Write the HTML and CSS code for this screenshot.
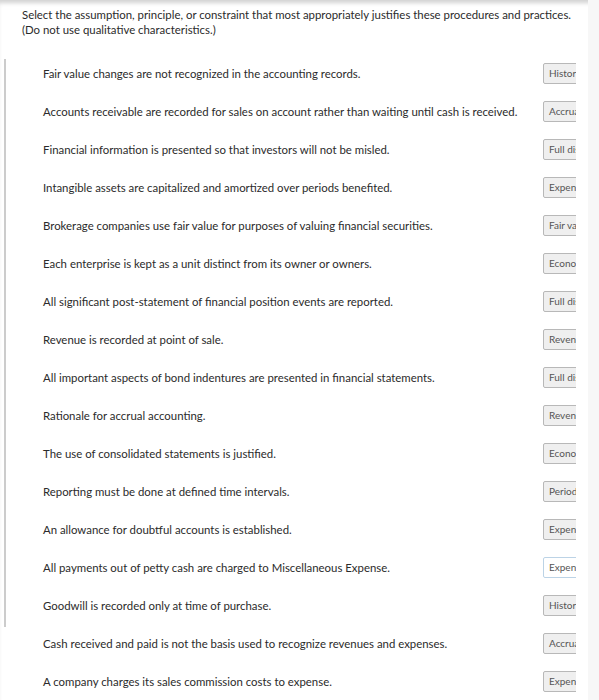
FILE: index.html
```html
<!DOCTYPE html>
<html lang="en">
<head>
    <meta charset="UTF-8">
    <meta name="viewport" content="width=device-width, initial-scale=1.0">
    <title>Assumptions, principles and constraints</title>
    <link rel="stylesheet" href="styles.css">
</head>
<body>
    <div class="page">
        <div class="main">
            <!-- Question prompt -->
            <div class="prompt">
                Select the assumption, principle, or constraint that most appropriately justifies these procedures and practices.<br>
                (Do not use qualitative characteristics.)
            </div>

            <!-- Matching list -->
            <div class="list">
                <div class="rail"></div>
                <div class="rows">
                    <div class="row"><span class="label">Fair value changes are not recognized in the accounting records.</span><div class="pick"><div class="box">Historical cost principle</div></div></div>
                    <div class="row"><span class="label">Accounts receivable are recorded for sales on account rather than waiting until cash is received.</span><div class="pick"><div class="box">Accrual-basis assumption</div></div></div>
                    <div class="row"><span class="label">Financial information is presented so that investors will not be misled.</span><div class="pick"><div class="box">Full disclosure principle</div></div></div>
                    <div class="row"><span class="label">Intangible assets are capitalized and amortized over periods benefited.</span><div class="pick"><div class="box">Expense recognition principle</div></div></div>
                    <div class="row"><span class="label">Brokerage companies use fair value for purposes of valuing financial securities.</span><div class="pick"><div class="box">Fair value principle</div></div></div>
                    <div class="row"><span class="label">Each enterprise is kept as a unit distinct from its owner or owners.</span><div class="pick"><div class="box">Economic entity assumption</div></div></div>
                    <div class="row"><span class="label">All significant post-statement of financial position events are reported.</span><div class="pick"><div class="box">Full disclosure principle</div></div></div>
                    <div class="row"><span class="label">Revenue is recorded at point of sale.</span><div class="pick"><div class="box">Revenue recognition principle</div></div></div>
                    <div class="row"><span class="label">All important aspects of bond indentures are presented in financial statements.</span><div class="pick"><div class="box">Full disclosure principle</div></div></div>
                    <div class="row"><span class="label">Rationale for accrual accounting.</span><div class="pick"><div class="box">Revenue recognition principle</div></div></div>
                    <div class="row"><span class="label">The use of consolidated statements is justified.</span><div class="pick"><div class="box">Economic entity assumption</div></div></div>
                    <div class="row"><span class="label">Reporting must be done at defined time intervals.</span><div class="pick"><div class="box">Periodicity assumption</div></div></div>
                    <div class="row"><span class="label">An allowance for doubtful accounts is established.</span><div class="pick"><div class="box">Expense recognition principle</div></div></div>
                    <div class="row"><span class="label">All payments out of petty cash are charged to Miscellaneous Expense.</span><div class="pick"><div class="box focused">Expense recognition principle</div></div></div>
                    <div class="row"><span class="label">Goodwill is recorded only at time of purchase.</span><div class="pick"><div class="box">Historical cost principle</div></div></div>
                    <div class="row"><span class="label">Cash received and paid is not the basis used to recognize revenues and expenses.</span><div class="pick"><div class="box">Accrual-basis assumption</div></div></div>
                    <div class="row"><span class="label">A company charges its sales commission costs to expense.</span><div class="pick"><div class="box">Expense recognition principle</div></div></div>
                </div>
            </div>
        </div>

        <!-- Right gutter -->
        <div class="side"></div>
    </div>
</body>
</html>
```

FILE: styles.css
```css
body {
    font-family: Lato, "Open Sans", Arial, sans-serif;
    margin: 0;
    background-color: #ffffff;
    color: #2b2b2b;
    overflow: hidden;
}

.page {
    display: flex;
    height: 700px;
    box-shadow: inset 0 5px 4px -2px rgba(0, 0, 0, 0.18);
}

.main {
    flex: 1;
    min-width: 0;
}

.side {
    width: 11px;
    flex-shrink: 0;
    background-color: #f7f7f7;
}

/* Question prompt */
.prompt {
    padding: 7px 0 0 22px;
    height: 47px;
    font-size: 11.4px;
    line-height: 15px;
    color: #2b2b2b;
}

/* Matching list */
.list {
    display: flex;
    align-items: flex-start;
}

.rail {
    width: 2px;
    height: 568px;
    margin: 5px 0 0 4px;
    background-color: #cccccc;
    flex-shrink: 0;
}

.rows {
    flex: 1;
    min-width: 0;
    padding: 0 12px 0 37px;
}

.row {
    display: flex;
    justify-content: space-between;
    align-items: center;
    height: 38px;
}

.label {
    font-size: 11.4px;
    color: #2b2b2b;
    white-space: nowrap;
}

.pick {
    width: 33px;
    flex-shrink: 0;
    overflow: hidden;
}

.box {
    width: 160px;
    height: 19px;
    line-height: 19px;
    padding-left: 5px;
    border: 1px solid #b8b8b8;
    border-radius: 2px;
    background-color: #efefef;
    font-size: 10px;
    color: #555555;
    white-space: nowrap;
}

.box.focused {
    background-color: #ffffff;
    border-color: #bcd3e6;
}
```
